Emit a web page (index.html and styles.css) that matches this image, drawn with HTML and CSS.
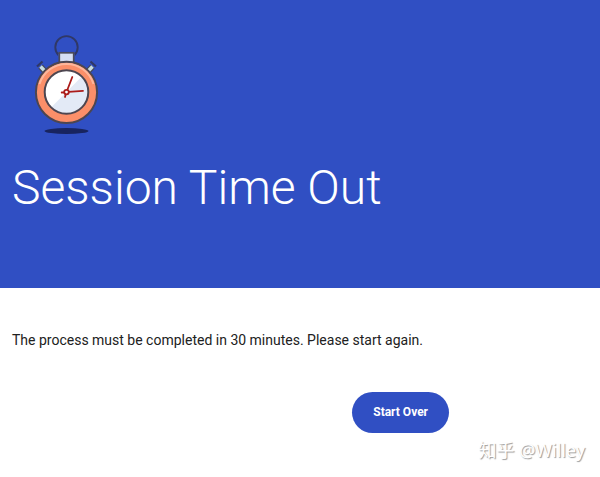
FILE: index.html
```
<!DOCTYPE html>
<html lang="en">
<head>
  <meta charset="UTF-8" />
  <meta name="viewport" content="width=device-width, initial-scale=1" />
  <title>Session Time Out</title>
  <link rel="stylesheet" href="styles.css">
</head>
<body>

<header class="hero">
  <svg class="stopwatch" viewBox="0 0 85 110" aria-hidden="true">
    <ellipse cx="41.5" cy="101" rx="22" ry="3" fill="#18245f" />
    <!-- ring and crown -->
    <circle cx="41.5" cy="17.3" r="11.2" fill="none" stroke="#303866" stroke-width="1.9" />
    <rect x="33" y="24" width="17" height="8" fill="#304fc3" />
    <rect x="34.3" y="22.8" width="14.4" height="10" fill="#d5def3" stroke="#4b4b59" stroke-width="1.7" />
    <!-- side buttons -->
    <g id="side-button">
      <path d="M15.5 36.5l4.2 4.5" stroke="#454858" stroke-width="6" />
      <path d="M15.5 36.5l4.2 4.5" stroke="#c6dce0" stroke-width="3.4" />
      <path d="M12 36.5L17.5 31.5" stroke="#303866" stroke-width="2.2" />
    </g>
    <use href="#side-button" transform="matrix(-1 0 0 1 83 0)" />
    <!-- case and dial -->
    <circle cx="41.5" cy="62.3" r="30.6" fill="#fb8f69" stroke="#4d4650" stroke-width="2" />
    <path d="M14.5 54A28.2 28.2 0 0 1 68.5 54" fill="none" stroke="#fdb79c" stroke-width="2" />
    <circle cx="41.5" cy="62" r="21.8" fill="#fff" />
    <path d="M56.9 46.6A21.8 21.8 0 0 1 26.1 77.4Z" fill="#e3eaf6" />
    <circle cx="41.5" cy="62" r="21.8" fill="none" stroke="#4d4650" stroke-width="2" />
    <!-- hands -->
    <g fill="none" stroke="#ab1c1a" stroke-width="1.8" stroke-linecap="round">
      <path d="M42.2 60.3L47.3 47M40.8 64L40 67M43.5 61.9L58 60.9M39.5 62.3L36.7 62.5" />
      <circle cx="41.5" cy="62.1" r="2.3" fill="#fff" />
    </g>
  </svg>
  <h1>Session Time Out</h1>
</header>

<main class="content">
  <p>The process must be completed in 30 minutes. Please start again.</p>
  <div class="actions">
    <button type="button" class="start-btn">Start Over</button>
  </div>
</main>

<div class="watermark">知乎 @Willey</div>

</body>
</html>
```

FILE: styles.css
```
* {
  box-sizing: border-box;
}

body {
  margin: 0;
  background: #fff;
  color: #212121;
  font-family: Roboto, "Noto Sans CJK SC", sans-serif;
}

.hero {
  padding: 30px 12px 70px;
  background: #304fc3;
  color: #fff;
}

.stopwatch {
  display: block;
  width: 85px;
  height: 110px;
  margin-left: 13px;
}

.hero h1 {
  margin: 18px 0 0;
  font-size: 48px;
  font-weight: 300;
  line-height: 60px;
}

.content {
  padding: 40px 12px 0;
}

.content p {
  margin: 0;
  font-size: 14px;
  line-height: 24px;
}

.actions {
  display: flex;
  justify-content: flex-end;
  margin-top: 40px;
  padding-right: 139px;
}

.start-btn {
  padding: 0 21px;
  border: none;
  border-radius: 21px;
  background: #304fc3;
  color: #fff;
  font-family: inherit;
  font-size: 12px;
  font-weight: 700;
  line-height: 41px;
  cursor: pointer;
}

.watermark {
  padding: 4px 15px 0;
  color: #fff;
  font-family: "Noto Sans", "Noto Sans CJK SC", sans-serif;
  font-size: 18px;
  line-height: 26px;
  text-align: right;
  text-shadow: 1px 1px 1px #999;
}
```
